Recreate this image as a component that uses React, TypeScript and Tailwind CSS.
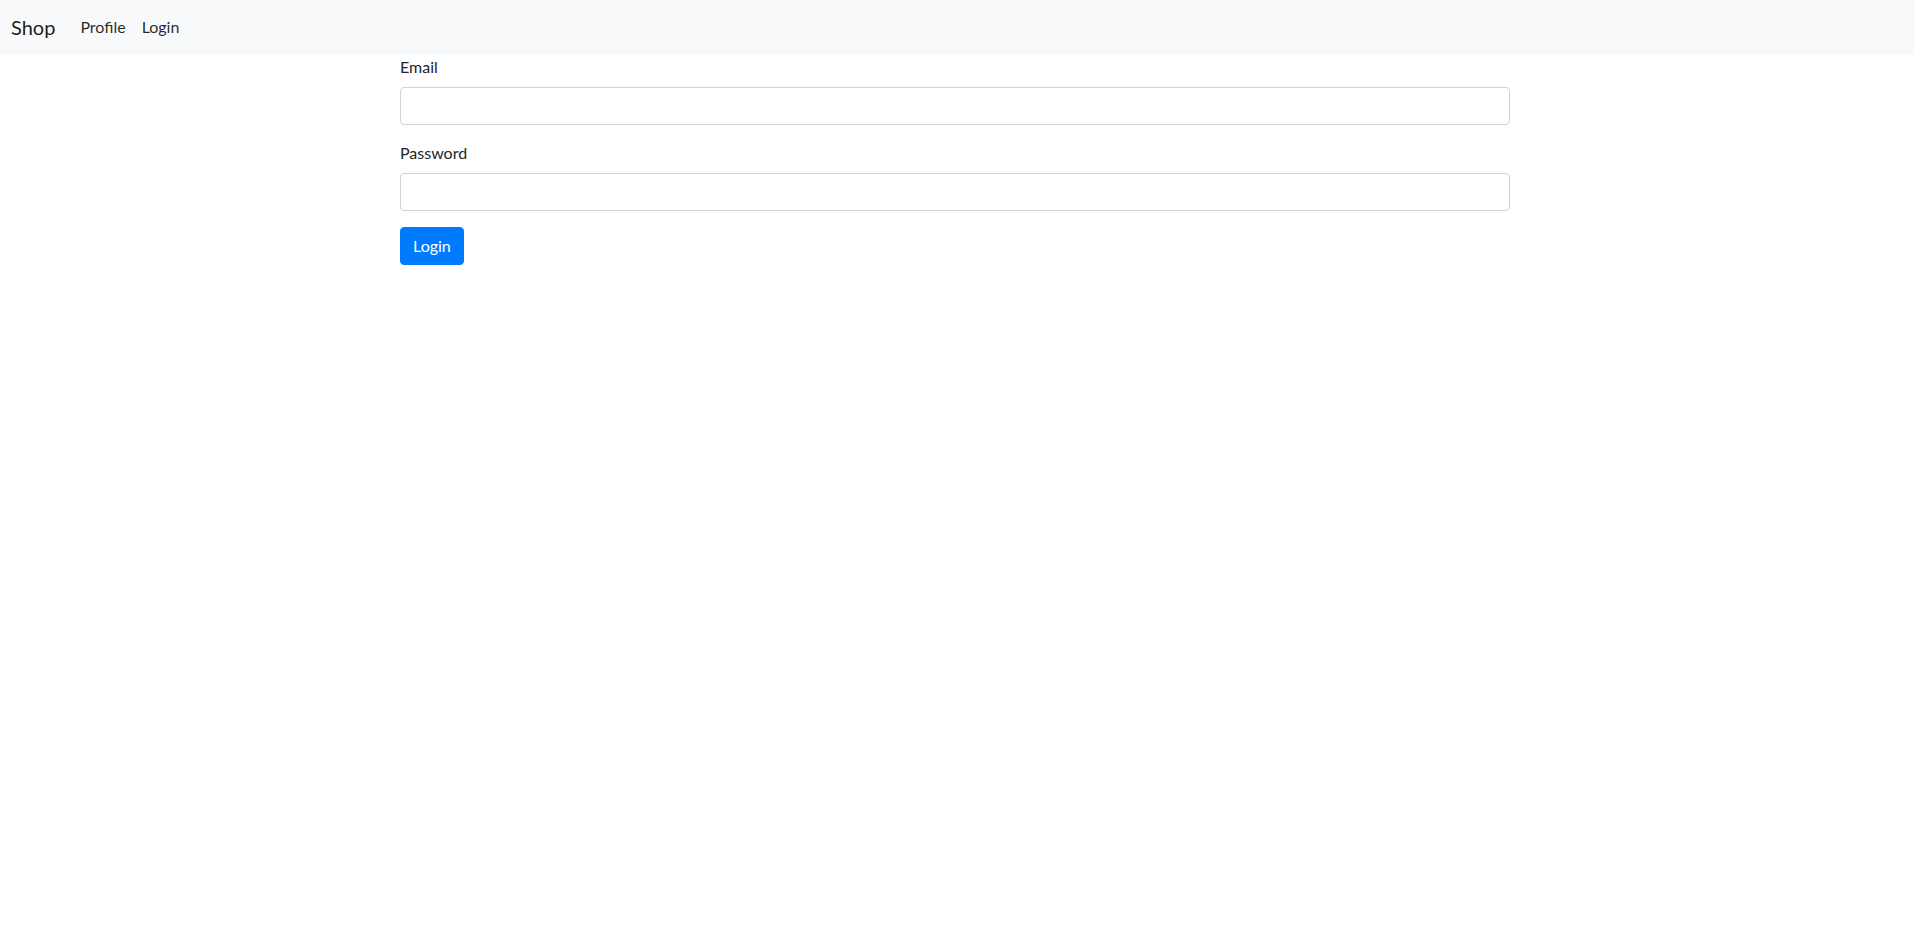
export default function App() {
  return (
    <div className="min-h-screen bg-white text-[#212529]" style={{ fontFamily: '"Lato", "Noto Sans", sans-serif' }}>
      <nav className="flex h-[55px] items-center bg-[#f8f9fa] px-[11px] pb-[2px]">
        <a className="mr-[17px] text-[20px] leading-[30px] text-[rgba(0,0,0,0.9)]">Shop</a>
        <div className="flex">
          <a className="px-[8px] text-[16px] leading-[24px] text-[rgba(0,0,0,0.85)]">Profile</a>
          <a className="px-[8px] text-[16px] leading-[24px] text-[rgba(0,0,0,0.85)]">Login</a>
        </div>
      </nav>
      <div className="ml-[400px] w-[1110px]">
        <form className="flex flex-col">
          <div className="mb-[16px] flex flex-col">
            <label className="mb-[8px] text-[16px] leading-[24px]">Email</label>
            <input type="email" className="h-[38px] w-full rounded-[4px] border border-[#ced4da] px-[12px] text-[16px] outline-none" />
          </div>
          <div className="mb-[16px] flex flex-col">
            <label className="mb-[8px] text-[16px] leading-[24px]">Password</label>
            <input type="password" className="h-[38px] w-full rounded-[4px] border border-[#ced4da] px-[12px] text-[16px] outline-none" />
          </div>
          <div>
            <button type="button" className="h-[38px] rounded-[4px] border border-[#007bff] bg-[#007bff] px-[12px] text-[16px] leading-[24px] text-white">
              Login
            </button>
          </div>
        </form>
      </div>
    </div>
  );
}
